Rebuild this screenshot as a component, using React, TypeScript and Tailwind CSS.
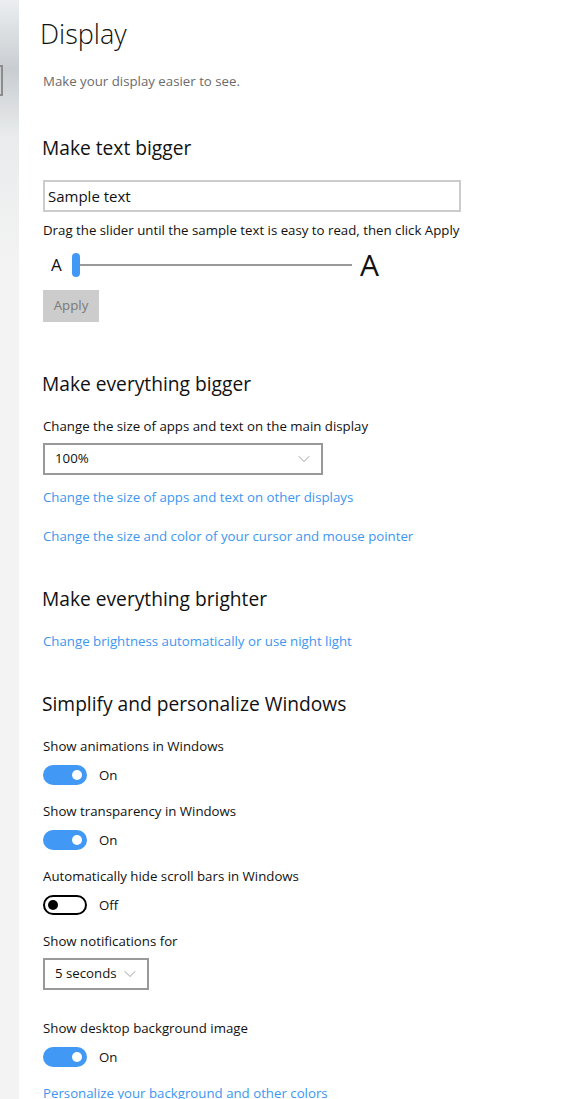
import { ChevronDown } from "lucide-react";

const font = { fontFamily: '"Open Sans", "Noto Sans", sans-serif' };

function Heading({ children, className = "" }: { children: React.ReactNode; className?: string }) {
  return (
    <h2 className={`text-[19.2px] leading-[28px] text-[#111] pl-[23px] ${className}`}>{children}</h2>
  );
}

function Label({ children, className = "" }: { children: React.ReactNode; className?: string }) {
  return <p className={`text-[13.25px] leading-[20px] text-[#111] ${className}`}>{children}</p>;
}

function LinkText({ children, className = "" }: { children: React.ReactNode; className?: string }) {
  return <a className={`block text-[13.25px] leading-[20px] text-[#3d96f0] ${className}`}>{children}</a>;
}

function Toggle({ on, className = "" }: { on: boolean; className?: string }) {
  return (
    <div className={`flex items-center gap-[12px] ${className}`}>
      {on ? (
        <div className="w-[44px] h-[20px] rounded-full bg-[#4298f5] flex items-center justify-end pr-[5px]">
          <div className="w-[10px] h-[10px] rounded-full bg-white" />
        </div>
      ) : (
        <div className="w-[44px] h-[20px] rounded-full border-2 border-black bg-white flex items-center pl-[3px]">
          <div className="w-[10px] h-[10px] rounded-full bg-black" />
        </div>
      )}
      <span className="text-[13.25px] leading-[20px] text-[#111]">{on ? "On" : "Off"}</span>
    </div>
  );
}

function Select({ value, width, className = "" }: { value: string; width: string; className?: string }) {
  return (
    <div
      className={`h-[32px] border-2 border-[#999] bg-white flex items-center justify-between pl-[10px] pr-[7px] ${width} ${className}`}
    >
      <span className="text-[13.25px] text-[#111]">{value}</span>
      <ChevronDown className="w-[20px] h-[20px] text-[#808080]" strokeWidth={0.9} />
    </div>
  );
}

export default function App() {
  return (
    <div className="flex h-[1099px] overflow-hidden bg-white" style={font}>
      <div className="w-[19px] shrink-0 bg-[linear-gradient(180deg,#eceef0_0px,#c9cdd1_70px,#e9ebec_135px,#f3f3f3_260px)]">
        <div className="mt-[65px] h-[31px] w-[3px] border-y-2 border-r-2 border-[#8c8c8c]" />
      </div>

      <main className="flex-1 flex flex-col pt-[14px]">
        <h1 className="text-[27px] leading-[40px] font-light text-[#111] pl-[21px]">Display</h1>
        <p className="mt-[17px] pl-[24px] text-[13.25px] leading-[20px] text-[#6b6b6b]">
          Make your display easier to see.
        </p>

        <Heading className="mt-[43px]">Make text bigger</Heading>
        <div className="pl-[24px] flex flex-col">
          <div className="mt-[18px] w-[418px] h-[32px] border-2 border-[#cccccc] flex items-center pl-[3px]">
            <span className="text-[15px] text-[#111]">Sample text</span>
          </div>
          <Label className="mt-[8px]">Drag the slider until the sample text is easy to read, then click Apply</Label>
          <div className="mt-[13px] h-[24px] flex items-center">
            <span className="ml-[8px] w-[21px] text-[17px] leading-[24px] text-[#111]">A</span>
            <div className="w-[8px] h-[24px] rounded-full bg-[#4298f5]" />
            <div className="w-[272px] h-[2px] bg-[#999]" />
            <span className="ml-[8px] text-[30px] leading-[24px] text-[#111]">A</span>
          </div>
          <div className="mt-[13px] w-[56px] h-[32px] bg-[#cccccc] flex items-center justify-center">
            <span className="text-[13.25px] text-[#7a7a7a]">Apply</span>
          </div>
        </div>

        <Heading className="mt-[48px]">Make everything bigger</Heading>
        <div className="pl-[24px] flex flex-col">
          <Label className="mt-[18px]">Change the size of apps and text on the main display</Label>
          <Select value="100%" width="w-[280px]" className="mt-[7px]" />
          <LinkText className="mt-[12px]">Change the size of apps and text on other displays</LinkText>
          <LinkText className="mt-[19px]">Change the size and color of your cursor and mouse pointer</LinkText>
        </div>

        <Heading className="mt-[39px]">Make everything brighter</Heading>
        <div className="pl-[24px] flex flex-col">
          <LinkText className="mt-[18px]">Change brightness automatically or use night light</LinkText>
        </div>

        <Heading className="mt-[39px]">Simplify and personalize Windows</Heading>
        <div className="pl-[24px] flex flex-col">
          <Label className="mt-[18px]">Show animations in Windows</Label>
          <Toggle on className="mt-[9px]" />
          <Label className="mt-[16px]">Show transparency in Windows</Label>
          <Toggle on className="mt-[9px]" />
          <Label className="mt-[16px]">Automatically hide scroll bars in Windows</Label>
          <Toggle on={false} className="mt-[9px]" />
          <Label className="mt-[16px]">Show notifications for</Label>
          <Select value="5 seconds" width="w-[106px]" className="mt-[7px]" />
          <Label className="mt-[28px]">Show desktop background image</Label>
          <Toggle on className="mt-[9px]" />
          <LinkText className="mt-[16px]">Personalize your background and other colors</LinkText>
        </div>
      </main>
    </div>
  );
}
